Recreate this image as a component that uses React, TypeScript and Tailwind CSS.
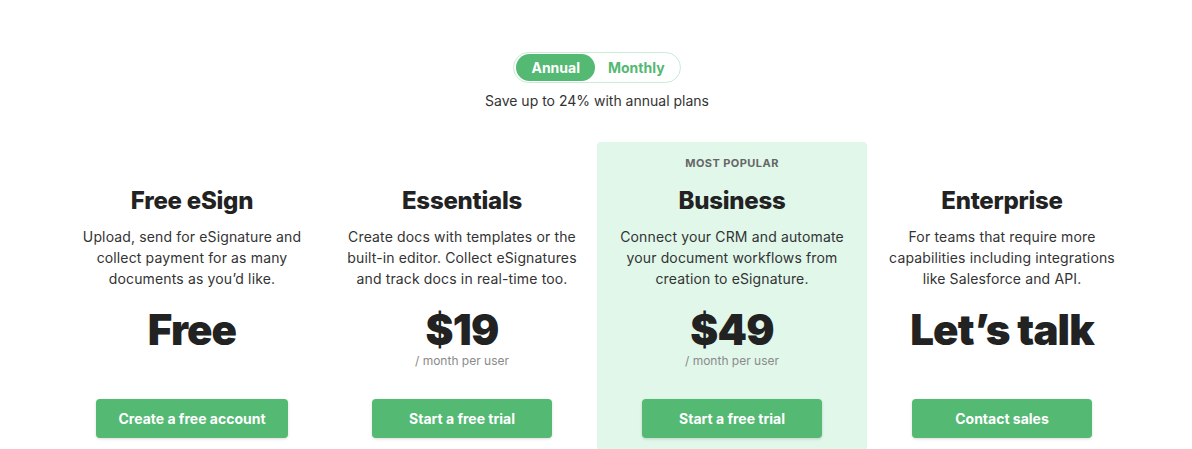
import { useState } from "react";

type Plan = {
  name: string;
  desc: string;
  price: string;
  per?: string;
  cta: string;
  popular?: boolean;
};

const plans: Plan[] = [
  {
    name: "Free eSign",
    desc: "Upload, send for eSignature and collect payment for as many documents as you’d like.",
    price: "Free",
    cta: "Create a free account",
  },
  {
    name: "Essentials",
    desc: "Create docs with templates or the built-in editor. Collect eSignatures and track docs in real-time too.",
    price: "$19",
    per: "/ month per user",
    cta: "Start a free trial",
  },
  {
    name: "Business",
    desc: "Connect your CRM and automate your document workflows from creation to eSignature.",
    price: "$49",
    per: "/ month per user",
    cta: "Start a free trial",
    popular: true,
  },
  {
    name: "Enterprise",
    desc: "For teams that require more capabilities including integrations like Salesforce and API.",
    price: "Let’s talk",
    cta: "Contact sales",
  },
];

function PlanCard({ plan }: { plan: Plan }) {
  return (
    <div
      className={`flex flex-col items-center px-5 pt-[14px] pb-10 text-center rounded-t-[4px] ${
        plan.popular ? "bg-[#e0f7ea]" : ""
      }`}
    >
      {/* label row is kept on every card so headings line up */}
      <div className="h-[14px] text-[11px] leading-[14px] font-bold tracking-[0.04em] text-[#666] uppercase">
        {plan.popular ? "Most popular" : ""}
      </div>
      <h3 className="mt-[16px] text-[24px] leading-[30px] font-extrabold text-[#222] tracking-[-0.01em]">
        {plan.name}
      </h3>
      <p className="mt-[10px] h-[63px] text-[14px] leading-[21px] tracking-[0.01em] text-[#333]">{plan.desc}</p>
      <div className="mt-[18px] text-[42px] leading-[46px] font-black text-[#222] tracking-[-0.02em]">
        {plan.price}
      </div>
      <div className="h-[16px] text-[12px] leading-[16px] text-[#8a8a8a]">{plan.per}</div>
      <button
        className={`mt-[30px] h-[39px] rounded-[4px] bg-[#53b973] text-white text-[14px] font-bold shadow-[0_1px_3px_rgba(0,0,0,0.15)] ${
          plan.cta === "Create a free account" ? "w-[192px]" : "w-[180px]"
        }`}
      >
        {plan.cta}
      </button>
    </div>
  );
}

export default function App() {
  const [billing, setBilling] = useState<"annual" | "monthly">("annual");

  return (
    <div
      className="min-h-screen bg-white flex flex-col items-center pt-[52px] pl-[2px] overflow-hidden"
      style={{ fontFamily: "Inter, 'Noto Sans', sans-serif" }}
    >
      {/* 年額 / 月額 切り替え */}
      <div className="flex items-center rounded-full border border-[#c9ecd5] p-[2px] h-[31px]">
        <button
          onClick={() => setBilling("annual")}
          className={`h-[27px] px-[15px] rounded-full text-[14px] leading-[26px] font-bold ${
            billing === "annual" ? "bg-[#53b973] text-white" : "text-[#53b973]"
          }`}
        >
          Annual
        </button>
        <button
          onClick={() => setBilling("monthly")}
          className={`h-[27px] px-[13px] rounded-full text-[14px] leading-[26px] font-bold ${
            billing === "monthly" ? "bg-[#53b973] text-white" : "text-[#53b973]"
          }`}
        >
          Monthly
        </button>
      </div>
      <p className="mt-[10px] text-[14px] leading-[16px] text-[#333]">Save up to 24% with annual plans</p>

      <div className="mt-[33px] grid grid-cols-[repeat(4,270px)]">
        {plans.map((p) => (
          <PlanCard key={p.name} plan={p} />
        ))}
      </div>
    </div>
  );
}
